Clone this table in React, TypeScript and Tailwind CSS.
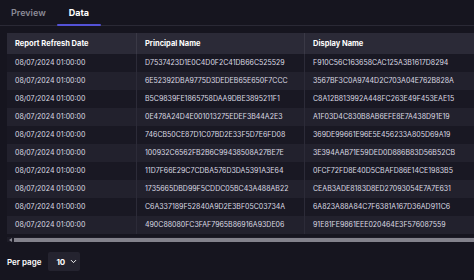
import { ChevronDown } from "lucide-react";

const rows = [
  ["D7537423D1E0C4D0F2C41DB66C525529", "F910C56C163658CAC125A3B1617D8294"],
  ["6E52392DBA9775D3DEDEB65E650F7CCC", "3567BF3C0A9744D2C703A04E762B828A"],
  ["B5C9839FE1865758DAA9DBE3895211F1", "C8A12B813992A448FC263E49F453EAE15"],
  ["0E478A24D4E001013275EDEF3B44A2E3", "A1F03D4C830B8AB6EFE8E7A438D91E19"],
  ["746CB50CE87D1C07BD2E33F5D7E6FD08", "369DE99661E96E5E456233A805D69A19"],
  ["100932C6562FB2B6C99438508A27BE7E", "3E394AAB71E59DED0D886B83D56B52CB"],
  ["11D7F66E29C7CDBA576D3DA5391A3E64", "0FCF72FD8E40D5CBAFD86E14CE1983B5"],
  ["1735665DBD99F5CDDC05BC43A488AB22", "CEAB3ADE8183D8ED27093054E7A7E631"],
  ["C6A337189F52840A9D2E3BF05C03734A", "6A823A88A84C7F6381A167D36AD911C6"],
  ["490C88080FC3FAF7965B86916A93DE06", "91E81FE9861EEE020464E3F576087559"],
];

export default function App() {
  return (
    <div className="h-[280px] w-[474px] overflow-hidden bg-[#16151f] font-['Inter',sans-serif] text-[#dddce4]">
      <div className="flex h-[26px] items-stretch border-b border-[#2a2935] px-[11px]">
        <div className="flex items-center text-[9px] font-semibold text-[#8b8a96]">Preview</div>
        <div className="relative ml-[11px] flex items-center px-[12px] text-[9px] font-bold text-white">
          Data
          <div className="absolute bottom-[-1px] left-0 right-0 h-[2px] rounded-full bg-[#5452d6]" />
        </div>
      </div>

      <div className="ml-[7px] mt-[7px] overflow-hidden">
        <div className="flex h-[21px] w-[600px] items-center bg-[#2b2a37] text-[7.5px] font-bold text-white">
          <div className="flex h-full w-[130px] items-center border-r border-[#3a3946] pl-[8px]">Report Refresh Date</div>
          <div className="flex h-full w-[168px] items-center border-r border-[#3a3946] pl-[8px]">Principal Name</div>
          <div className="flex h-full w-[200px] items-center border-r border-[#3a3946] pl-[8px]">Display Name</div>
        </div>
        {rows.map(([p, d], i) => (
          <div
            key={p}
            className={`flex h-[18px] w-[600px] items-center text-[7px] ${i % 2 === 0 ? "bg-[#191823]" : "bg-[#22212d]"}`}
          >
            <div className="flex h-full w-[130px] items-center border-r border-[#2c2b38] pl-[8px]">08/07/2024 01:00:00</div>
            <div className="flex h-full w-[168px] items-center border-r border-[#2c2b38] pl-[8px]">{p}</div>
            <div className="flex h-full w-[200px] items-center border-r border-[#2c2b38] pl-[8px]">{d}</div>
          </div>
        ))}
        <div className="mt-[3px] flex h-[5px] items-center bg-[#1d1c27]">
          <div className="ml-[2px] h-0 w-0 border-y-[2px] border-r-[3px] border-y-transparent border-r-[#8b8a94]" />
          <div className="ml-[2px] h-[4px] flex-1 bg-[#83828c]" />
        </div>
      </div>

      <div className="mt-[10px] flex items-center px-[7px]">
        <span className="text-[8px] font-semibold text-white">Per page</span>
        <div className="ml-[7px] flex h-[19px] w-[32px] items-center gap-[4px] rounded-[2px] bg-[#24232f] pl-[8px] text-[8px] font-bold text-white">
          10
          <ChevronDown size={9} strokeWidth={2.5} />
        </div>
      </div>
    </div>
  );
}
